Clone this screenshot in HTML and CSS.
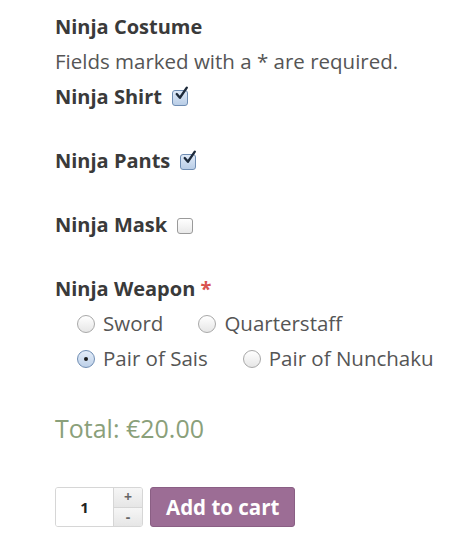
FILE: index.html
```html
<!DOCTYPE html>
<html>
<head>
<meta charset="utf-8">
<link rel="stylesheet" href="styles.css">
</head>
<body>
<div class="addon">
  <h3 class="addon-title">Ninja Costume</h3>
  <p class="note">Fields marked with a * are required.</p>
  <div class="field">
    <span class="label">Ninja Shirt</span>
    <span class="check on"><svg viewBox="0 0 16 16" width="17" height="17"><path d="M3.5 8.5 L6.5 12 L13 2.5" fill="none" stroke="#1d2a3a" stroke-width="2.2" stroke-linecap="round" stroke-linejoin="round"/></svg></span>
  </div>
  <div class="field">
    <span class="label">Ninja Pants</span>
    <span class="check on"><svg viewBox="0 0 16 16" width="17" height="17"><path d="M3.5 8.5 L6.5 12 L13 2.5" fill="none" stroke="#1d2a3a" stroke-width="2.2" stroke-linecap="round" stroke-linejoin="round"/></svg></span>
  </div>
  <div class="field">
    <span class="label">Ninja Mask</span>
    <span class="check"></span>
  </div>
  <div class="field weapon">
    <div class="label">Ninja Weapon <span class="req">*</span></div>
    <div class="radios">
      <div class="radio-row">
        <label class="opt"><span class="radio"></span>Sword</label>
        <label class="opt"><span class="radio"></span>Quarterstaff</label>
      </div>
      <div class="radio-row">
        <label class="opt"><span class="radio sel"></span>Pair of Sais</label>
        <label class="opt"><span class="radio"></span>Pair of Nunchaku</label>
      </div>
    </div>
  </div>
  <div class="total">Total: €20.00</div>
  <div class="cart">
    <div class="qty">
      <div class="qty-val">1</div>
      <div class="qty-btns">
        <span class="qbtn">+</span>
        <span class="qbtn">-</span>
      </div>
    </div>
    <button class="add">Add to cart</button>
  </div>
</div>
</body>
</html>
```
FILE: styles.css
```css
html, body {
  margin: 0;
  padding: 0;
  background: #ffffff;
}
body {
  font-family: "Open Sans", "DejaVu Sans", sans-serif;
  color: #555555;
}
.addon {
  padding: 9px 0 0 55px;
  font-size: 20.5px;
  line-height: 35px;
}
.addon-title {
  margin: 0;
  font-size: 20px;
  font-weight: 700;
  color: #3a3a3a;
  line-height: 35px;
}
.note {
  margin: 0;
  color: #555555;
}
.field {
  display: flex;
  align-items: center;
  gap: 10px;
  margin-bottom: 29px;
}
.label {
  font-weight: 700;
  font-size: 20px;
  color: #3a3a3a;
}
.check {
  width: 14px;
  height: 14px;
  border: 1px solid #9a9a9a;
  border-radius: 3px;
  background: linear-gradient(#ffffff, #e9e9e9);
  position: relative;
  margin-top: 3px;
}
.check.on {
  border-color: #6f8db3;
  background: linear-gradient(#dfeaf8, #b9cde6);
}
.check svg {
  position: absolute;
  left: 0;
  top: -6px;
}
.weapon {
  display: block;
  margin-bottom: 35px;
}
.req {
  color: #d9534f;
}
.radios {
  padding-left: 22px;
}
.radio-row {
  display: flex;
  gap: 35px;
}
.opt {
  display: flex;
  align-items: center;
  gap: 8px;
  color: #555555;
}
.radio {
  width: 18px;
  height: 18px;
  border: 1px solid #a8a8a8;
  border-radius: 50%;
  background: linear-gradient(#ffffff, #e6e6e6);
  box-sizing: border-box;
  position: relative;
}
.radio.sel {
  border-color: #6f8db3;
  background: linear-gradient(#e4edf9, #bdd0e8);
}
.radio.sel::after {
  content: "";
  position: absolute;
  left: 6px;
  top: 6px;
  width: 4px;
  height: 4px;
  border-radius: 50%;
  background: #1d1d1d;
}
.total {
  font-size: 25px;
  line-height: 35px;
  color: #8aa07a;
  margin-bottom: 41px;
}
.cart {
  display: flex;
  align-items: center;
  gap: 7px;
}
.qty {
  display: flex;
  height: 40px;
  border: 1px solid #d6d6d6;
  border-radius: 3px;
  overflow: hidden;
  box-sizing: border-box;
}
.qty-val {
  width: 57px;
  display: flex;
  align-items: center;
  justify-content: center;
  font-size: 15px;
  font-weight: 700;
  color: #222;
  background: #fff;
}
.qty-btns {
  width: 28px;
  display: flex;
  flex-direction: column;
  border-left: 1px solid #d6d6d6;
}
.qbtn {
  flex: 1;
  display: flex;
  align-items: center;
  justify-content: center;
  font-size: 14px;
  line-height: 1;
  font-weight: 700;
  color: #666;
  background: linear-gradient(#f6f6f6, #e6e6e6);
}
.qbtn + .qbtn {
  border-top: 1px solid #d6d6d6;
}
.add {
  height: 40px;
  padding: 0 15px;
  border: 1px solid #8a5f84;
  border-radius: 3px;
  background: #9c6d95;
  color: #fff;
  font-family: "Open Sans", "DejaVu Sans", sans-serif;
  font-weight: 700;
  font-size: 20.5px;
  cursor: pointer;
}
```
